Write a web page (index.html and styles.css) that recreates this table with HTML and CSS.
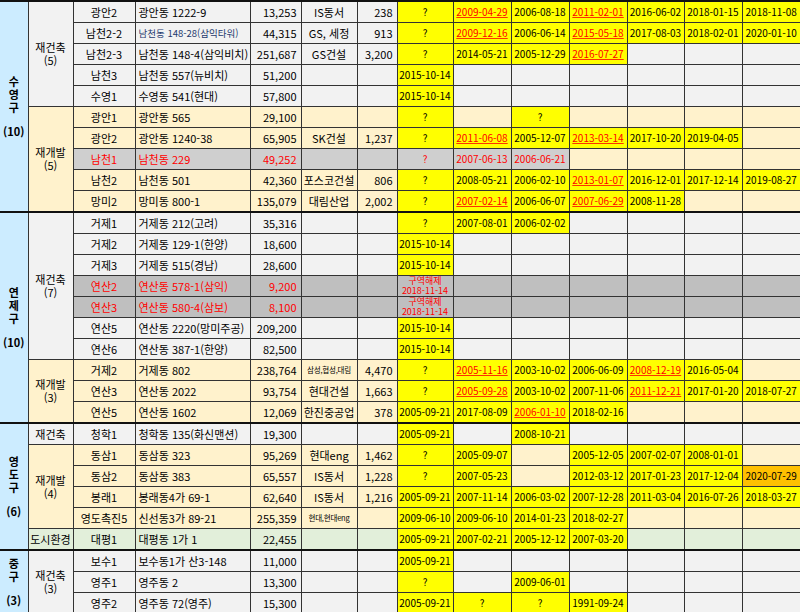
FILE: index.html
```html
<!DOCTYPE html>
<html lang="ko">
<head>
<meta charset="utf-8">
<title>정비사업 현황</title>
<link rel="stylesheet" href="styles.css">
</head>
<body>
<table class="tbl">
<colgroup>
<col class="c1"><col class="c2"><col class="c3"><col class="c4"><col class="c5"><col class="c6"><col class="c7">
<col class="c8"><col class="c9"><col class="c10"><col class="c11"><col class="c12"><col class="c13"><col class="c14">
</colgroup>
<tbody>
<!-- 수영구 -->
<tr class="g first">
<td class="gu" rowspan="10"><div class="vt">수<br>영<br>구<span class="gap"></span>(10)</div></td>
<td class="t" rowspan="5">재건축<br>(5)</td>
<td class="nm">광안2</td><td class="ad">광안동 1222-9</td><td class="n">13,253</td><td class="co">IS동서</td><td class="n">238</td>
<td class="dt y">?</td><td class="dt y r u">2009-04-29</td><td class="dt y">2006-08-18</td><td class="dt y r u">2011-02-01</td><td class="dt y">2016-06-02</td><td class="dt y">2018-01-15</td><td class="dt y">2018-11-08</td>
</tr>
<tr class="g">
<td class="nm">남천2-2</td><td class="ad sm navy">남천동 148-28(삼익타워)</td><td class="n">44,315</td><td class="co">GS, 세정</td><td class="n">913</td>
<td class="dt y">?</td><td class="dt y r u">2009-12-16</td><td class="dt y">2006-06-14</td><td class="dt y r u">2015-05-18</td><td class="dt y">2017-08-03</td><td class="dt y">2018-02-01</td><td class="dt y">2020-01-10</td>
</tr>
<tr class="g">
<td class="nm">남천2-3</td><td class="ad">남천동 148-4(삼익비치)</td><td class="n">251,687</td><td class="co">GS건설</td><td class="n">3,200</td>
<td class="dt y">?</td><td class="dt y">2014-05-21</td><td class="dt y">2005-12-29</td><td class="dt y r u">2016-07-27</td><td class="dt"></td><td class="dt"></td><td class="dt"></td>
</tr>
<tr class="g">
<td class="nm">남천3</td><td class="ad">남천동 557(뉴비치)</td><td class="n">51,200</td><td class="co"></td><td class="n"></td>
<td class="dt y">2015-10-14</td><td class="dt"></td><td class="dt"></td><td class="dt"></td><td class="dt"></td><td class="dt"></td><td class="dt"></td>
</tr>
<tr class="g">
<td class="nm">수영1</td><td class="ad">수영동 541(현대)</td><td class="n">57,800</td><td class="co"></td><td class="n"></td>
<td class="dt y">2015-10-14</td><td class="dt"></td><td class="dt"></td><td class="dt"></td><td class="dt"></td><td class="dt"></td><td class="dt"></td>
</tr>
<tr class="b">
<td class="t" rowspan="5">재개발<br>(5)</td>
<td class="nm">광안1</td><td class="ad">광안동 565</td><td class="n">29,100</td><td class="co"></td><td class="n"></td>
<td class="dt y">?</td><td class="dt"></td><td class="dt y">?</td><td class="dt"></td><td class="dt"></td><td class="dt"></td><td class="dt"></td>
</tr>
<tr class="b">
<td class="nm">광안2</td><td class="ad">광안동 1240-38</td><td class="n">65,905</td><td class="co">SK건설</td><td class="n">1,237</td>
<td class="dt y">?</td><td class="dt y r u">2011-06-08</td><td class="dt y">2005-12-07</td><td class="dt y r u">2013-03-14</td><td class="dt y">2017-10-20</td><td class="dt y">2019-04-05</td><td class="dt"></td>
</tr>
<tr class="b">
<td class="nm d1 r">남천1</td><td class="ad d1 r">남천동 229</td><td class="n d1 r">49,252</td><td class="co d1"></td><td class="n d1"></td>
<td class="dt d1 r">?</td><td class="dt d1 r">2007-06-13</td><td class="dt d1 r">2006-06-21</td><td class="dt"></td><td class="dt"></td><td class="dt"></td><td class="dt"></td>
</tr>
<tr class="b">
<td class="nm">남천2</td><td class="ad">남천동 501</td><td class="n">42,360</td><td class="co">포스코건설</td><td class="n">806</td>
<td class="dt y">?</td><td class="dt y">2008-05-21</td><td class="dt y">2006-02-10</td><td class="dt y r u">2013-01-07</td><td class="dt y">2016-12-01</td><td class="dt y">2017-12-14</td><td class="dt y">2019-08-27</td>
</tr>
<tr class="b">
<td class="nm">망미2</td><td class="ad">망미동 800-1</td><td class="n">135,079</td><td class="co">대림산업</td><td class="n">2,002</td>
<td class="dt y">?</td><td class="dt y r u">2007-02-14</td><td class="dt y">2006-06-07</td><td class="dt y r u">2007-06-29</td><td class="dt y">2008-11-28</td><td class="dt"></td><td class="dt"></td>
</tr>
<!-- 연제구 -->
<tr class="g sep">
<td class="gu" rowspan="10"><div class="vt">연<br>제<br>구<span class="gap"></span>(10)</div></td>
<td class="t" rowspan="7">재건축<br>(7)</td>
<td class="nm">거제1</td><td class="ad">거제동 212(고려)</td><td class="n">35,316</td><td class="co"></td><td class="n"></td>
<td class="dt y">?</td><td class="dt y">2007-08-01</td><td class="dt y">2006-02-02</td><td class="dt"></td><td class="dt"></td><td class="dt"></td><td class="dt"></td>
</tr>
<tr class="g">
<td class="nm">거제2</td><td class="ad">거제동 129-1(한양)</td><td class="n">18,600</td><td class="co"></td><td class="n"></td>
<td class="dt y">2015-10-14</td><td class="dt"></td><td class="dt"></td><td class="dt"></td><td class="dt"></td><td class="dt"></td><td class="dt"></td>
</tr>
<tr class="g">
<td class="nm">거제3</td><td class="ad">거제동 515(경남)</td><td class="n">28,600</td><td class="co"></td><td class="n"></td>
<td class="dt y">2015-10-14</td><td class="dt"></td><td class="dt"></td><td class="dt"></td><td class="dt"></td><td class="dt"></td><td class="dt"></td>
</tr>
<tr class="d2">
<td class="nm r">연산2</td><td class="ad r">연산동 578-1(삼익)</td><td class="n r">9,200</td><td class="co"></td><td class="n"></td>
<td class="dt r"><div class="two">구역해제<br>2018-11-14</div></td><td class="dt"></td><td class="dt"></td><td class="dt"></td><td class="dt"></td><td class="dt"></td><td class="dt"></td>
</tr>
<tr class="d2">
<td class="nm r">연산3</td><td class="ad r">연산동 580-4(삼보)</td><td class="n r">8,100</td><td class="co"></td><td class="n"></td>
<td class="dt r"><div class="two">구역해제<br>2018-11-14</div></td><td class="dt"></td><td class="dt"></td><td class="dt"></td><td class="dt"></td><td class="dt"></td><td class="dt"></td>
</tr>
<tr class="g">
<td class="nm">연산5</td><td class="ad">연산동 2220(망미주공)</td><td class="n">209,200</td><td class="co"></td><td class="n"></td>
<td class="dt y">2015-10-14</td><td class="dt"></td><td class="dt"></td><td class="dt"></td><td class="dt"></td><td class="dt"></td><td class="dt"></td>
</tr>
<tr class="g">
<td class="nm">연산6</td><td class="ad">연산동 387-1(한양)</td><td class="n">82,500</td><td class="co"></td><td class="n"></td>
<td class="dt y">2015-10-14</td><td class="dt"></td><td class="dt"></td><td class="dt"></td><td class="dt"></td><td class="dt"></td><td class="dt"></td>
</tr>
<tr class="b">
<td class="t" rowspan="3">재개발<br>(3)</td>
<td class="nm">거제2</td><td class="ad">거제동 802</td><td class="n">238,764</td><td class="co xs">삼성,협성,대림</td><td class="n">4,470</td>
<td class="dt y">?</td><td class="dt y r u">2005-11-16</td><td class="dt y">2003-10-02</td><td class="dt y">2006-06-09</td><td class="dt y r u">2008-12-19</td><td class="dt y">2016-05-04</td><td class="dt"></td>
</tr>
<tr class="b">
<td class="nm">연산3</td><td class="ad">연산동 2022</td><td class="n">93,754</td><td class="co">현대건설</td><td class="n">1,663</td>
<td class="dt y">?</td><td class="dt y r u">2005-09-28</td><td class="dt y">2003-10-02</td><td class="dt y">2007-11-06</td><td class="dt y r u">2011-12-21</td><td class="dt y">2017-01-20</td><td class="dt y">2018-07-27</td>
</tr>
<tr class="b">
<td class="nm">연산5</td><td class="ad">연산동 1602</td><td class="n">12,069</td><td class="co">한진중공업</td><td class="n">378</td>
<td class="dt y">2005-09-21</td><td class="dt y">2017-08-09</td><td class="dt y r u">2006-01-10</td><td class="dt y">2018-02-16</td><td class="dt"></td><td class="dt"></td><td class="dt"></td>
</tr>
<!-- 영도구 -->
<tr class="g sep">
<td class="gu" rowspan="6"><div class="vt">영<br>도<br>구<span class="gap"></span>(6)</div></td>
<td class="t">재건축</td>
<td class="nm">청학1</td><td class="ad">청학동 135(화신맨션)</td><td class="n">19,300</td><td class="co"></td><td class="n"></td>
<td class="dt y">2005-09-21</td><td class="dt"></td><td class="dt y">2008-10-21</td><td class="dt"></td><td class="dt"></td><td class="dt"></td><td class="dt"></td>
</tr>
<tr class="b">
<td class="t" rowspan="4">재개발<br>(4)</td>
<td class="nm">동삼1</td><td class="ad">동삼동 323</td><td class="n">95,269</td><td class="co">현대eng</td><td class="n">1,462</td>
<td class="dt y">?</td><td class="dt y">2005-09-07</td><td class="dt"></td><td class="dt y">2005-12-05</td><td class="dt y">2007-02-07</td><td class="dt y">2008-01-01</td><td class="dt"></td>
</tr>
<tr class="b">
<td class="nm">동삼2</td><td class="ad">동삼동 383</td><td class="n">65,557</td><td class="co">IS동서</td><td class="n">1,228</td>
<td class="dt y">?</td><td class="dt y">2007-05-23</td><td class="dt"></td><td class="dt y">2012-03-12</td><td class="dt y">2017-01-23</td><td class="dt y">2017-12-04</td><td class="dt o">2020-07-29</td>
</tr>
<tr class="b">
<td class="nm">봉래1</td><td class="ad">봉래동4가 69-1</td><td class="n">62,640</td><td class="co">IS동서</td><td class="n">1,216</td>
<td class="dt y">2005-09-21</td><td class="dt y">2007-11-14</td><td class="dt y">2006-03-02</td><td class="dt y">2007-12-28</td><td class="dt y">2011-03-04</td><td class="dt y">2016-07-26</td><td class="dt y">2018-03-27</td>
</tr>
<tr class="b">
<td class="nm">영도촉진5</td><td class="ad">신선동3가 89-21</td><td class="n">255,359</td><td class="co xs">현대,현대eng</td><td class="n"></td>
<td class="dt y">2009-06-10</td><td class="dt y">2009-06-10</td><td class="dt y">2014-01-23</td><td class="dt y">2018-02-27</td><td class="dt"></td><td class="dt"></td><td class="dt"></td>
</tr>
<tr class="gr">
<td class="t">도시환경</td>
<td class="nm">대평1</td><td class="ad">대평동 1가 1</td><td class="n">22,455</td><td class="co"></td><td class="n"></td>
<td class="dt y">2005-09-21</td><td class="dt y">2007-02-21</td><td class="dt y">2005-12-12</td><td class="dt y">2007-03-20</td><td class="dt"></td><td class="dt"></td><td class="dt"></td>
</tr>
<!-- 중구 -->
<tr class="g sep">
<td class="gu" rowspan="3"><div class="vt">중<br>구<span class="gap"></span>(3)</div></td>
<td class="t" rowspan="3">재건축<br>(3)</td>
<td class="nm">보수1</td><td class="ad">보수동1가 산3-148</td><td class="n">11,000</td><td class="co"></td><td class="n"></td>
<td class="dt y">2005-09-21</td><td class="dt"></td><td class="dt"></td><td class="dt"></td><td class="dt"></td><td class="dt"></td><td class="dt"></td>
</tr>
<tr class="g">
<td class="nm">영주1</td><td class="ad">영주동 2</td><td class="n">13,300</td><td class="co"></td><td class="n"></td>
<td class="dt y">?</td><td class="dt"></td><td class="dt y">2009-06-01</td><td class="dt"></td><td class="dt"></td><td class="dt"></td><td class="dt"></td>
</tr>
<tr class="g last">
<td class="nm">영주2</td><td class="ad">영주동 72(영주)</td><td class="n">15,300</td><td class="co"></td><td class="n"></td>
<td class="dt y">2005-09-21</td><td class="dt y">?</td><td class="dt y">?</td><td class="dt y">1991-09-24</td><td class="dt"></td><td class="dt"></td><td class="dt"></td>
</tr>
</tbody>
</table>
</body>
</html>
```

FILE: styles.css
```css
html, body {
  margin: 0;
  padding: 0;
  background: #ffffff;
}

body {
  font-family: "Noto Sans CJK KR", "Liberation Sans", sans-serif;
  font-size: 11px;
  color: #000000;
}

.tbl {
  border-collapse: collapse;
  table-layout: fixed;
  width: 800px;
}

.c1 { width: 28px; }
.c2 { width: 45px; }
.c3 { width: 62px; }
.c4 { width: 115px; }
.c5 { width: 51px; }
.c6 { width: 56px; }
.c7 { width: 40px; }
.c8 { width: 56px; }
.c9 { width: 58px; }
.c10 { width: 58px; }
.c11 { width: 58px; }
.c12 { width: 57px; }
.c13 { width: 58px; }
.c14 { width: 58px; }

.tbl td {
  height: 20px;
  padding: 0 3px;
  border: 1px solid #333333;
  line-height: 12px;
  white-space: nowrap;
  overflow: hidden;
  vertical-align: middle;
  text-align: center;
}

.tbl td:last-child { border-right: 0; }

/* row backgrounds */
tr.g > td { background: #f2f2f2; }
tr.b > td { background: #fff2cc; }
tr.gr > td { background: #e2efda; }
tr.d2 > td { background: #bfbfbf; }

tr.first > td { border-top: 2px solid #111111; }
tr.sep > td { border-top: 2px solid #111111; }
tr.last > td { border-bottom: 2px solid #111111; }

/* district cell */
.tbl td.gu {
  background: #ccecff;
  border-left: 0;
  font-weight: bold;
  font-size: 11px;
  padding: 0;
}

.vt {
  display: block;
  text-align: center;
  line-height: 13px;
}

.gap {
  display: block;
  height: 11px;
}

.tbl td.t {
  line-height: 13px;
  padding: 0;
}

.tbl td.nm { text-align: center; padding: 0 2px; }
.tbl td.ad { text-align: left; padding: 0 2px 0 3px; }
.tbl td.n { text-align: right; padding: 0 4px 0 2px; }
.tbl td.co { text-align: center; padding: 0 1px; }
.tbl td.dt { font-size: 10px; padding: 0 1px; text-align: center; }

.tbl td.sm { font-size: 9.5px; }
.tbl td.xs { font-size: 7.5px; letter-spacing: -0.2px; }
.navy { color: #1f3a6e; }

.tbl td.y { background: #ffff00; }
.tbl td.o { background: #ffc000; }
.tbl td.d1 { background: #cfcfcf; }

.r { color: #ff0000; }
.u { text-decoration: underline; text-decoration-color: #ff3300; }

.two {
  height: 20px;
  display: flex;
  flex-direction: column;
  justify-content: center;
  line-height: 10px;
  font-size: 9px;
}
```
